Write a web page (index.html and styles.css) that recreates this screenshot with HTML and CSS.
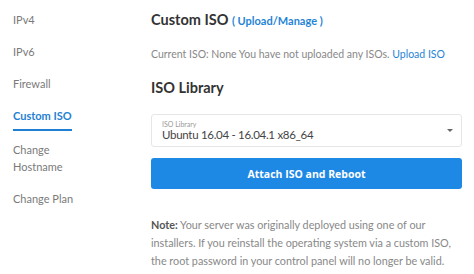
FILE: index.html
```html
<!DOCTYPE html>
<html>
<head>
<meta charset="utf-8">
<link rel="stylesheet" href="styles.css">
</head>
<body>
<div class="page">
  <nav class="side">
    <a class="nav-item">IPv4</a>
    <a class="nav-item">IPv6</a>
    <a class="nav-item">Firewall</a>
    <a class="nav-item active">Custom ISO</a>
    <a class="nav-item">Change<br>Hostname</a>
    <a class="nav-item">Change Plan</a>
  </nav>
  <main class="content">
    <h2 class="title">Custom ISO <span class="manage">( Upload/Manage )</span></h2>
    <p class="current">Current ISO: None You have not uploaded any ISOs. <span class="link">Upload ISO</span></p>
    <h2 class="title lib">ISO Library</h2>
    <div class="select">
      <div class="select-text">
        <div class="select-label">ISO Library</div>
        <div class="select-value">Ubuntu 16.04 - 16.04.1 x86_64</div>
      </div>
      <span class="caret"></span>
    </div>
    <button class="btn">Attach ISO and Reboot</button>
    <p class="note"><b>Note:</b> Your server was originally deployed using one of our installers. If you reinstall the operating system via a custom ISO, the root password in your control panel will no longer be valid.</p>
  </main>
</div>
</body>
</html>
```
FILE: styles.css
```css
html, body { margin: 0; padding: 0; background: #fff; }
body { font-family: "Lato", "Open Sans", sans-serif; color: #777; width: 474px; height: 274px; overflow: hidden; }
.page { display: flex; }
.side { width: 138px; padding: 11px 0 0 13px; box-sizing: border-box; display: flex; flex-direction: column; }
.nav-item { font-size: 11px; line-height: 17px; color: #7a7a7a; display: block; margin-bottom: 15px; }
.nav-item.active { color: #1f7fd3; font-weight: 700; align-self: flex-start; padding-bottom: 5px; border-bottom: 2px solid #1f7fd3; margin-bottom: 10px; }
.content { flex: 1; padding: 9px 12px 0 13px; }
.title { margin: 0; font-size: 14.5px; font-weight: 700; color: #333; line-height: 22px; }
.manage { font-size: 11px; color: #1f84d6; font-weight: 700; }
.current { margin: 14px 0 0; font-size: 10.5px; line-height: 16px; color: #888; }
.link { color: #1f84d6; }
.lib { margin-top: 15px; }
.select { margin-top: 15px; height: 33px; border: 1px solid #e6e6e6; border-radius: 3px; box-sizing: border-box; display: flex; align-items: center; padding: 0 8px 0 10px; }
.select-text { flex: 1; }
.select-label { font-size: 7px; line-height: 8px; color: #999; }
.select-value { font-size: 11.5px; line-height: 14px; color: #444; letter-spacing: -0.3px; }
.caret { width: 0; height: 0; border-left: 3px solid transparent; border-right: 3px solid transparent; border-top: 3px solid #666; }
.btn { display: block; width: 100%; margin-top: 11px; height: 31px; border: none; border-radius: 3px; background: #1e88e5; color: #fff; font-family: "Open Sans", sans-serif; font-weight: 700; font-size: 10.5px; }
.note { margin: 27px 0 0; font-size: 10.8px; line-height: 18px; color: #888; }
.note b { color: #555; font-weight: 700; }
```
